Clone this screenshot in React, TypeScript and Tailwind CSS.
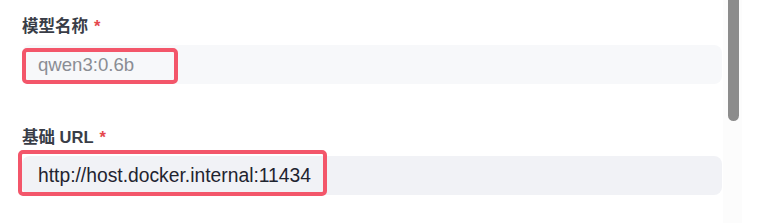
import React from "react";

const font = { fontFamily: '"Liberation Sans", "Noto Sans CJK SC", sans-serif' };

function Field({
  label,
  value,
  placeholder,
  bg,
  text,
  highlight,
}: {
  label: string;
  value?: string;
  placeholder?: string;
  bg: string;
  text: string;
  highlight: string;
}) {
  return (
    <div className="flex flex-col">
      <label className="h-5 flex items-center text-[16.5px] font-bold text-[#393d47] leading-5">
        {label}
        <span className="ml-[6px] text-[#e5484d]">*</span>
      </label>
      <div className={`relative mt-[9px] h-[39px] w-full rounded-lg ${bg}`}>
        <input
          readOnly
          value={value ?? ""}
          placeholder={placeholder}
          className={`h-full w-full bg-transparent pl-4 text-[#1f2430] outline-none placeholder:text-[#8a8d94] ${text}`}
          style={font}
        />
        <div className={`pointer-events-none absolute rounded-[5px] border-[4px] border-[#f3566a] ${highlight}`} />
      </div>
    </div>
  );
}

export default function App() {
  return (
    <div className="flex h-[223px] w-[770px] overflow-hidden bg-white" style={font}>
      <div className="flex w-[723px] flex-col pl-[22px] pr-[1px] pt-4">
        <Field
          label="模型名称"
          placeholder="qwen3:0.6b"
          bg="bg-[#f7f8fa]"
          text="text-[18.6px]"
          highlight="left-0 top-[3px] h-[36px] w-[156px]"
        />
        <div className="h-[43px]" />
        <Field
          label="基础 URL"
          value="http://host.docker.internal:11434"
          bg="bg-[#f1f2f6]"
          text="text-[19.3px]"
          highlight="-left-1 -top-[6px] h-[46px] w-[309px]"
        />
      </div>
      <div className="flex w-[19px] justify-center bg-[#fcfcfc] pl-[1px]">
        <div className="h-[121px] w-[11px] rounded-b-full bg-[#8c8c8c]" />
      </div>
    </div>
  );
}
